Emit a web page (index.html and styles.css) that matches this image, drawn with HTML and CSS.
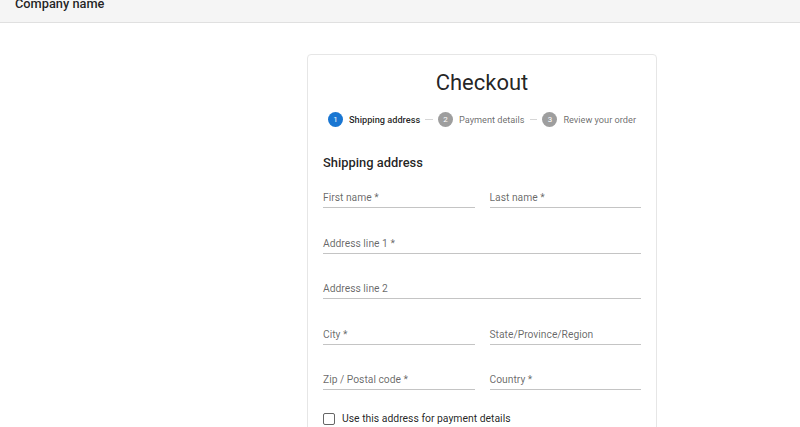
FILE: index.html
```html
<!DOCTYPE html>
<html lang="en">
<head>
<meta charset="utf-8">
<title>Checkout</title>
<link rel="stylesheet" href="styles.css">
</head>
<body>
<header class="appbar">
  <span class="brand">Company name</span>
</header>
<main class="main">
  <section class="paper">
    <h1 class="title">Checkout</h1>
    <ol class="stepper">
      <li class="step active"><span class="dot">1</span><span class="step-label">Shipping address</span></li>
      <li class="connector"></li>
      <li class="step"><span class="dot">2</span><span class="step-label">Payment details</span></li>
      <li class="connector"></li>
      <li class="step"><span class="dot">3</span><span class="step-label">Review your order</span></li>
    </ol>
    <h2 class="section-title">Shipping address</h2>
    <div class="form">
      <div class="field"><span class="label">First name *</span></div>
      <div class="field"><span class="label">Last name *</span></div>
      <div class="field full"><span class="label">Address line 1 *</span></div>
      <div class="field full"><span class="label">Address line 2</span></div>
      <div class="field"><span class="label">City *</span></div>
      <div class="field"><span class="label">State/Province/Region</span></div>
      <div class="field"><span class="label">Zip / Postal code *</span></div>
      <div class="field"><span class="label">Country *</span></div>
    </div>
    <label class="check"><span class="box"></span><span class="check-label">Use this address for payment details</span></label>
  </section>
</main>
</body>
</html>
```

FILE: styles.css
```css
* { box-sizing: border-box; }
html, body {
  margin: 0;
  padding: 0;
  height: 100%;
  overflow: hidden;
  background: #ffffff;
  font-family: Roboto, "Liberation Sans", Arial, sans-serif;
  color: rgba(0, 0, 0, 0.87);
}
.appbar {
  height: 23px;
  background: #f5f5f5;
  border-bottom: 1px solid #e0e0e0;
  display: flex;
  align-items: flex-end;
  padding: 0 0 10px 15px;
  overflow: hidden;
}
.brand {
  font-size: 12.8px;
  font-weight: 500;
  line-height: 16px;
  white-space: nowrap;
}
.main {
  padding-top: 31px;
  padding-left: 307px;
}
.paper {
  width: 350px;
  height: 400px;
  border: 1px solid #e6e6e6;
  border-radius: 4px;
  padding: 14.5px 15px 0;
}
.title {
  margin: 0;
  text-align: center;
  font-size: 22px;
  font-weight: 400;
  line-height: 26px;
}
.stepper {
  list-style: none;
  margin: 15.5px 0 0;
  padding: 0 5px;
  display: flex;
  align-items: center;
  height: 16px;
}
.step {
  display: flex;
  align-items: center;
  gap: 6px;
  white-space: nowrap;
}
.dot {
  width: 15px;
  height: 15px;
  border-radius: 50%;
  background: #9e9e9e;
  color: #fff;
  font-size: 8px;
  line-height: 15px;
  text-align: center;
}
.step.active .dot { background: #1976d2; }
.step-label {
  font-size: 9.2px;
  color: rgba(0, 0, 0, 0.6);
}
.step.active .step-label {
  color: rgba(0, 0, 0, 0.87);
  font-weight: 500;
}
.connector {
  flex: 1;
  margin: 0 5px;
  border-top: 1px solid #d6d6d6;
}
.section-title {
  margin: 25px 0 0;
  font-size: 12.9px;
  font-weight: 500;
  line-height: 21.6px;
}
.form {
  display: grid;
  grid-template-columns: 1fr 1fr;
  column-gap: 15px;
  row-gap: 9.5px;
  margin-top: -1.6px;
}
.field {
  height: 36px;
  padding-top: 19px;
  padding-bottom: 2px;
  border-bottom: 1px solid #c4c4c4;
}
.field.full { grid-column: 1 / -1; }
.label {
  display: block;
  font-size: 10.3px;
  line-height: 14px;
  color: rgba(0, 0, 0, 0.6);
}
.check {
  display: flex;
  align-items: center;
  gap: 7px;
  margin-top: 23px;
  height: 12px;
}
.box {
  width: 12px;
  height: 12px;
  border: 1.5px solid rgba(0, 0, 0, 0.6);
  border-radius: 2px;
}
.check-label {
  font-size: 10.4px;
  line-height: 14px;
}
```
